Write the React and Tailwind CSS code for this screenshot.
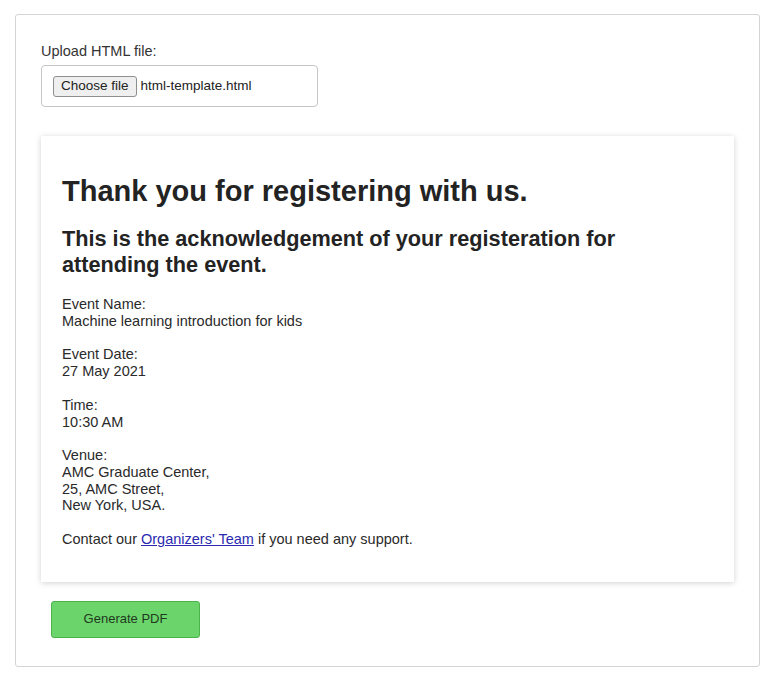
export default function App() {
  const font = { fontFamily: '"Liberation Sans", Arial, sans-serif' };
  return (
    <div className="min-h-screen bg-white pt-[14px] pb-2 px-[15px] text-[#222]" style={font}>
      <div className="w-[745px] border border-[#d4d4d4] rounded-[3px] pt-[28px] pb-[28px] px-[25px]">
        <label className="block text-[14.5px] leading-[16px] text-[#333] mb-[6px]">Upload HTML file:</label>
        <div className="w-[277px] h-[42px] border border-[#c6c6c6] rounded-[4px] flex items-center pl-[11px] gap-[4px]">
          <span className="h-[21px] px-[7px] flex items-center bg-[#efefef] border border-[#8f8f8f] rounded-[3px] text-[13.5px] text-[#222]">Choose file</span>
          <span className="text-[13.5px] text-[#222]">html-template.html</span>
        </div>

        <div className="mt-[29px] bg-white shadow-[0_1px_6px_rgba(0,0,0,0.18)] px-[21px] pt-[20px] pb-[34px]">
          <h1 className="text-[29px] leading-[32px] font-bold text-[#232323] my-[19px]">Thank you for registering with us.</h1>
          <h2 className="max-w-[580px] text-[21.7px] leading-[26px] font-bold text-[#232323] mt-[18px] mb-[18px]">
            This is the acknowledgement of your registeration for attending the event.
          </h2>
          <div className="text-[14.5px] leading-[16.7px] text-[#2a2a2a] space-y-[17px]">
            <p>Event Name:<br />Machine learning introduction for kids</p>
            <p>Event Date:<br />27 May 2021</p>
            <p>Time:<br />10:30 AM</p>
            <p>Venue:<br />AMC Graduate Center,<br />25, AMC Street,<br />New York, USA.</p>
            <p>
              Contact our <a href="#" className="text-[#2b2bb0] underline">Organizers' Team</a> if you need any support.
            </p>
          </div>
        </div>

        <button className="mt-[19px] ml-[10px] w-[149px] h-[37px] bg-[#6bd56b] border border-[#4cb34c] rounded-[3px] text-[13px] text-[#1f3a1f]">
          Generate PDF
        </button>
      </div>
    </div>
  );
}
